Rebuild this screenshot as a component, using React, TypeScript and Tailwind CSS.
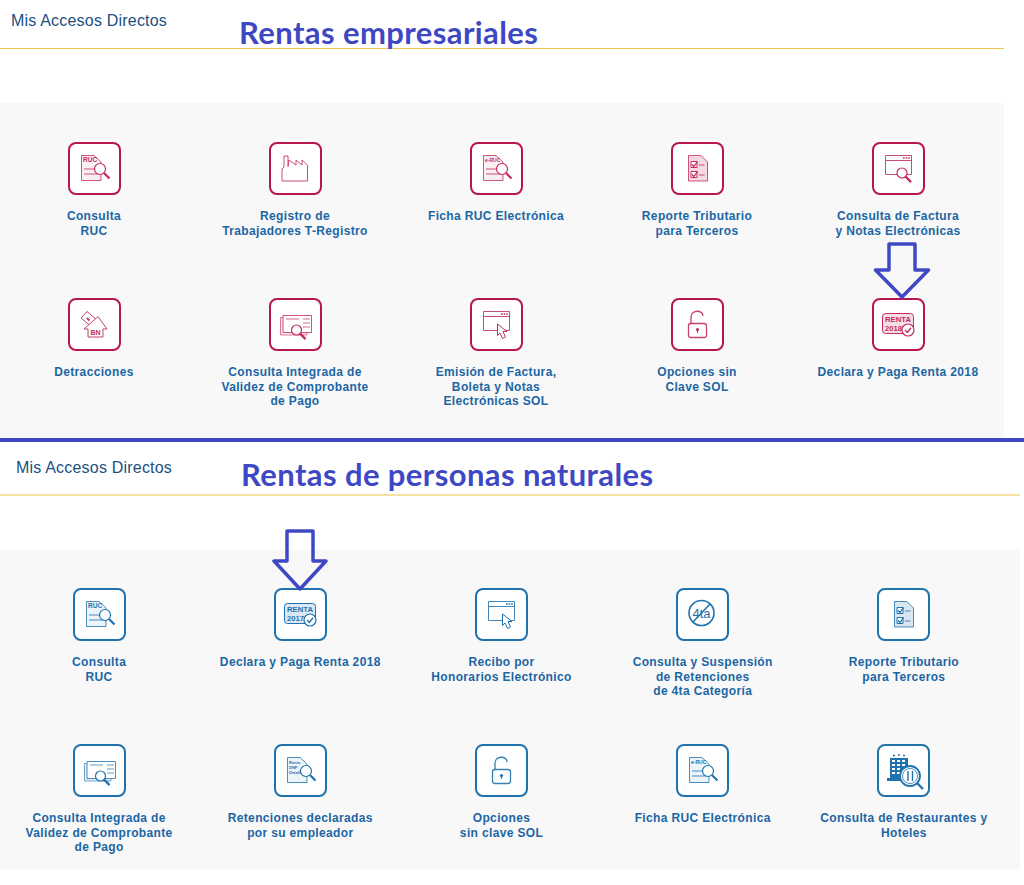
const Magnifier = ({ cx, cy, r = 5.5 }: { cx: number; cy: number; r?: number }) => (
  <g>
    <circle cx={cx} cy={cy} r={r} fill="#fff" stroke="currentColor" strokeWidth="1.2" />
    <path d={`M${cx + r * 0.72} ${cy + r * 0.72}L${cx + r * 0.72 + 5.5} ${cy + r * 0.72 + 5.5}`} stroke="currentColor" strokeWidth="2.2" />
  </g>
);

const DocIcon = ({ lines, size = 6.5 }: { lines: string[]; size?: number }) => (
  <g>
    <path d="M13.5 13.5H26L33 20V38.5H13.5Z" fill="currentColor" fillOpacity=".08" stroke="currentColor" strokeOpacity=".8" />
    {lines.map((line, i) => (
      <text key={line} x="15" y={20 + i * (size + 1)} fontSize={size} fontWeight="700" fontFamily="'Liberation Sans', sans-serif" fill="currentColor" stroke="none">
        {line}
      </text>
    ))}
    {lines.length === 1 && <path d="M16 27H27M16 32H30" stroke="currentColor" strokeOpacity=".8" />}
    <Magnifier cx={32} cy={27} r={5.5} />
  </g>
);

const WindowFrame = () => (
  <g>
    <path d="M13.5 13.5H39.5V32.5H13.5ZM13.5 18.5H39.5" fill="#fff" stroke="currentColor" strokeOpacity=".85" />
    <path d="M31 16H38" stroke="currentColor" strokeWidth="1.4" strokeDasharray="1.6 1" />
  </g>
);

const ChecklistIcon = () => (
  <g stroke="currentColor">
    <path d="M17.5 13.5H30L36.5 20V39H17.5Z" fill="currentColor" fillOpacity=".18" strokeOpacity=".8" />
    <path d="M20 19.5H26V25.5H20ZM20 29.5H26V35.5H20Z" fill="#fff" />
    <path d="M21 22.5L23 24.5L26.5 19.5M21 32.5L23 34.5L26.5 29.5" fill="none" strokeWidth="1.3" />
    <path d="M28 23H33.5M28 33H33.5" strokeOpacity=".8" />
  </g>
);

const LockIcon = () => (
  <g fill="none" stroke="currentColor" strokeOpacity=".9">
    <rect x="17.5" y="25.5" width="18" height="14" rx="2.5" strokeWidth="1.3" />
    <path d="M20 25.5V19C20 11.5 32 11.5 32 18" strokeWidth="1.3" />
    <circle cx="26.5" cy="31.5" r="1.6" fill="currentColor" stroke="none" />
    <path d="M26.5 32V35" strokeWidth="1.2" />
  </g>
);

const RentaIcon = ({ year }: { year: string }) => (
  <g>
    <rect x="10.5" y="15.5" width="31" height="20" rx="3" fill="currentColor" fillOpacity=".16" stroke="currentColor" />
    <text x="13" y="23.5" fontSize="8" fontWeight="700" textLength="26" lengthAdjust="spacingAndGlyphs" fontFamily="'Liberation Sans', sans-serif" fill="currentColor">RENTA</text>
    <text x="13" y="32.5" fontSize="8" fontWeight="700" textLength="17" lengthAdjust="spacingAndGlyphs" fontFamily="'Liberation Sans', sans-serif" fill="currentColor">{year}</text>
    <circle cx="36" cy="32" r="6" fill="#fff" stroke="currentColor" strokeWidth="1.2" />
    <path d="M33 32L35.4 34.4L39 29.8" fill="none" stroke="currentColor" strokeWidth="1.4" />
  </g>
);

const ComprobanteIcon = () => (
  <g stroke="currentColor">
    <path d="M11.5 19.5H38V37H11.5Z" fill="currentColor" fillOpacity=".12" strokeOpacity=".6" />
    <path d="M14 17.5H42.5V34.5H14Z" fill="#fff" strokeOpacity=".8" />
    <path d="M17 21H30M34 21H41M34 25H41M34 29H41" strokeOpacity=".7" />
    <Magnifier cx={27.5} cy={32} r={5} />
  </g>
);

const ICONS: Record<string, React.ReactNode> = {
  ruc: <DocIcon lines={["RUC"]} />,
  eruc: <DocIcon lines={["e-RUC"]} size={5} />,
  dnp: <DocIcon lines={["Renta", "DNP", "Detalle"]} size={4} />,
  factory: <path d="M13 39V27L15 25V14H19V24.5L20 18L27 23V18L33 23V18L38.5 23V39Z" fill="none" stroke="currentColor" strokeOpacity=".85" />,
  checklist: <ChecklistIcon />,
  windowSearch: (
    <g>
      <WindowFrame />
      <Magnifier cx={30} cy={31} r={5} />
    </g>
  ),
  windowCursor: (
    <g>
      <WindowFrame />
      <path d="M27.5 26L37 33.5H33L35.5 39L32.5 40.5L30 35L27.5 37.5Z" fill="#fff" stroke="currentColor" />
    </g>
  ),
  bn: (
    <g fill="none" stroke="currentColor" strokeOpacity=".9">
      <path d="M13 20L19 13.5L29 22L23 28.5Z" fill="#fff" />
      <path d="M16 31L30 18.5L39 31H35V39H20V31Z" fill="#fff" />
      <path d="M19 20L21.5 22.5" strokeWidth="2.2" />
      <text x="22.5" y="37" fontSize="7" fontWeight="700" fontFamily="'Liberation Sans', sans-serif" fill="currentColor" stroke="none">BN</text>
    </g>
  ),
  comprobante: <ComprobanteIcon />,
  lock: <LockIcon />,
  renta2018: <RentaIcon year="2018" />,
  renta2017: <RentaIcon year="2017" />,
  cuarta: (
    <g>
      <circle cx="25.5" cy="25" r="12.5" fill="none" stroke="currentColor" strokeWidth="1.6" />
      <text x="25.5" y="29.5" fontSize="13" textAnchor="middle" fontFamily="'Liberation Sans', sans-serif" fill="currentColor">4ta</text>
      <path d="M17 34L34 16" stroke="currentColor" strokeWidth="1.5" />
    </g>
  ),
  hotel: (
    <g>
      <path d="M16 11.5H18M21 11H23M26 11.5H28" stroke="currentColor" strokeWidth="1.5" />
      <rect x="13" y="14" width="18" height="21" fill="currentColor" />
      <path d="M15 17H18M20 17H23M25 17H28M15 21H18M20 21H23M25 21H28M15 25H18M20 25H23M15 29H18M20 29H23" stroke="#fff" strokeWidth="2" />
      <rect x="10" y="34" width="16" height="3" fill="currentColor" />
      <circle cx="33" cy="32" r="10" fill="#fff" stroke="currentColor" strokeWidth="1.8" />
      <circle cx="33" cy="32" r="7.5" fill="none" stroke="currentColor" strokeWidth=".8" />
      <path d="M31 27V37M35.5 27V37" stroke="currentColor" strokeWidth="1.4" />
      <path d="M40 39L46 45" stroke="currentColor" strokeWidth="2.4" />
    </g>
  ),
};

// the two arrows in the picture are not the same height
const ArrowTall = () => (
  <svg viewBox="0 0 58 62" className="absolute left-1/2 -top-[61px] w-[58px] h-[62px] -translate-x-1/2 text-[#3f48c4]">
    <path d="M16 2H42V32H55L29 60L3 32H16Z" fill="none" stroke="currentColor" strokeWidth="3.5" strokeLinejoin="round" />
  </svg>
);

const ArrowShort = () => (
  <svg viewBox="0 0 58 58" className="absolute left-[28px] -top-[58px] w-[58px] h-[58px] -translate-x-1/2 text-[#3f48c4]">
    <path d="M16 2H42V28H55.5L29 55L2.5 28H16Z" fill="none" stroke="currentColor" strokeWidth="3.5" strokeLinejoin="round" />
  </svg>
);

type Item = { icon: string; label: string[]; arrow?: "tall" | "short" };

const Shortcut = ({ item, color }: { item: Item; color: string }) => (
  <div className="flex flex-col items-center text-center">
    <div className={`relative w-[53px] h-[53px] rounded-lg border-2 bg-white ${color}`}>
      <svg viewBox="2 2 49 49" className="w-[49px] h-[49px] overflow-visible">
        {ICONS[item.icon]}
      </svg>
      {item.arrow === "tall" && <ArrowTall />}
      {item.arrow === "short" && <ArrowShort />}
    </div>
    <p className="mt-[14px] text-[12px] leading-[14.6px] font-bold tracking-[0.35px] text-[#1b66a4] whitespace-nowrap">
      {item.label.map((line) => (
        <span key={line} className="block">
          {line}
        </span>
      ))}
    </p>
  </div>
);

const empresariales: Item[] = [
  { icon: "ruc", label: ["Consulta", "RUC"] },
  { icon: "factory", label: ["Registro de", "Trabajadores T-Registro"] },
  { icon: "eruc", label: ["Ficha RUC Electrónica"] },
  { icon: "checklist", label: ["Reporte Tributario", "para Terceros"] },
  { icon: "windowSearch", label: ["Consulta de Factura", "y Notas Electrónicas"] },
  { icon: "bn", label: ["Detracciones"] },
  { icon: "comprobante", label: ["Consulta Integrada de", "Validez de Comprobante", "de Pago"] },
  { icon: "windowCursor", label: ["Emisión de Factura,", "Boleta y Notas", "Electrónicas SOL"] },
  { icon: "lock", label: ["Opciones sin", "Clave SOL"] },
  { icon: "renta2018", label: ["Declara y Paga Renta 2018"], arrow: "short" },
];

const naturales: Item[] = [
  { icon: "ruc", label: ["Consulta", "RUC"] },
  { icon: "renta2017", label: ["Declara y Paga Renta 2018"], arrow: "tall" },
  { icon: "windowCursor", label: ["Recibo por", "Honorarios Electrónico"] },
  { icon: "cuarta", label: ["Consulta y Suspensión", "de Retenciones", "de 4ta Categoría"] },
  { icon: "checklist", label: ["Reporte Tributario", "para Terceros"] },
  { icon: "comprobante", label: ["Consulta Integrada de", "Validez de Comprobante", "de Pago"] },
  { icon: "dnp", label: ["Retenciones declaradas", "por su empleador"] },
  { icon: "lock", label: ["Opciones", "sin clave SOL"] },
  { icon: "eruc", label: ["Ficha RUC Electrónica"] },
  { icon: "hotel", label: ["Consulta de Restaurantes y", "Hoteles"] },
];

export default function App() {
  return (
    <div className="w-[1024px] h-[885px] overflow-hidden bg-white font-['Liberation_Sans',Arial,sans-serif]">
      {/* Rentas empresariales */}
      <section className="h-[438px] w-[1004px]">
        <header className="flex h-[49px] border-b border-[#efc356] pl-[11px]">
          <span className="mt-[12px] w-[228px] text-[16px] leading-[18px] tracking-[0.2px] whitespace-nowrap text-[#20507f]">Mis Accesos Directos</span>
          <h1 className="mt-[13px] font-['Lato',sans-serif] text-[31px] leading-[38px] font-bold tracking-[0.4px] whitespace-nowrap text-[#3f48c4]">
            Rentas empresariales
          </h1>
        </header>
        <div className="mt-[54px] grid h-[335px] grid-cols-5 content-start gap-x-[13px] gap-y-[103px] bg-[#f8f8f8] pt-[39px] pr-3">
          {empresariales.map((item) => (
            <div key={item.label.join()} className="h-[53px]">
              <Shortcut item={item} color="border-[#b8164f] text-[#c22d5e]" />
            </div>
          ))}
        </div>
      </section>

      <div className="h-1 bg-[#3f48c4]" />

      {/* Rentas de personas naturales */}
      <section className="w-[1020px]">
        <header className="flex h-[54px] border-b-2 border-[#f6e0a4] pl-4">
          <span className="mt-[17px] w-[225px] text-[16px] leading-[18px] tracking-[0.2px] whitespace-nowrap text-[#20507f]">Mis Accesos Directos</span>
          <h1 className="mt-[13px] font-['Lato',sans-serif] text-[31px] leading-[38px] font-bold tracking-[0.4px] whitespace-nowrap text-[#3f48c4]">
            Rentas de personas naturales
          </h1>
        </header>
        <div className="mt-[54px] grid h-[320px] grid-cols-5 content-start gap-x-[13px] gap-y-[103px] bg-[#f8f8f8] pt-[38px] pr-[22px] pl-[5px]">
          {naturales.map((item) => (
            <div key={item.label.join()} className="h-[53px]">
              <Shortcut item={item} color="border-[#1f72ad] text-[#1f72ad]" />
            </div>
          ))}
        </div>
      </section>
    </div>
  );
}
